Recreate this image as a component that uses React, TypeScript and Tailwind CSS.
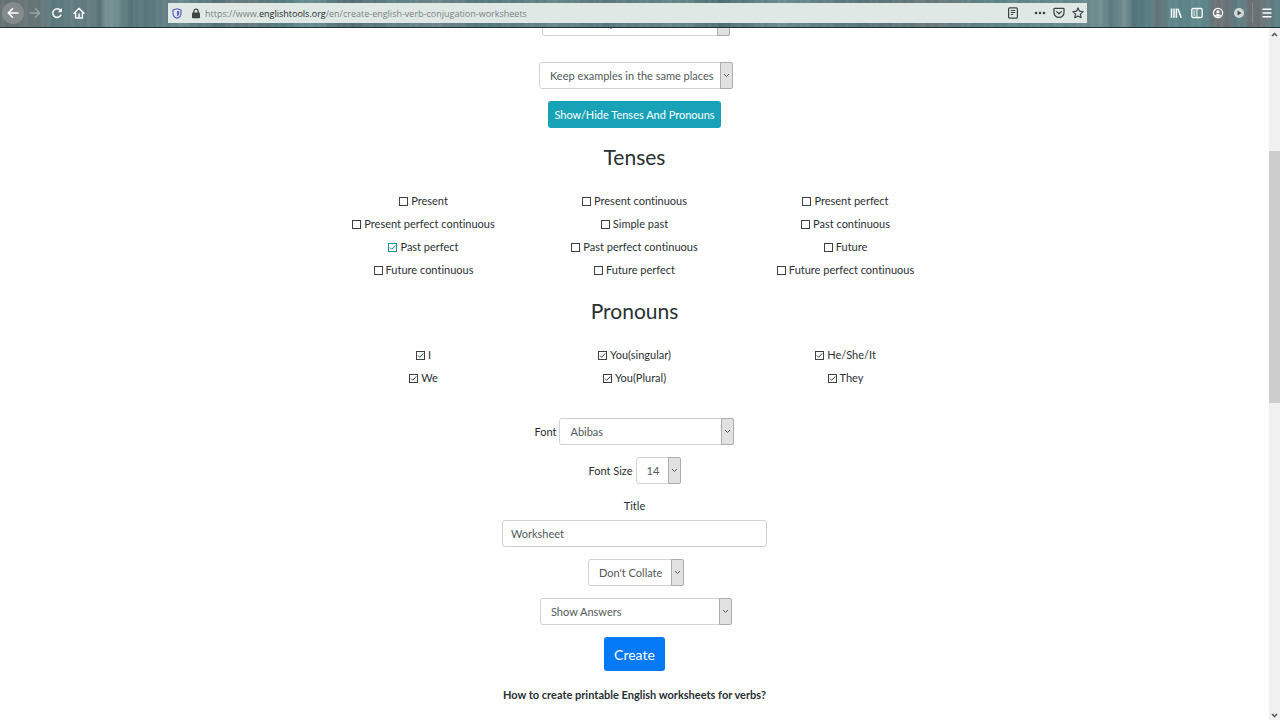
import React from "react";

const tenses = [
  { label: "Present", checked: false },
  { label: "Present continuous", checked: false },
  { label: "Present perfect", checked: false },
  { label: "Present perfect continuous", checked: false },
  { label: "Simple past", checked: false },
  { label: "Past continuous", checked: false },
  { label: "Past perfect", checked: true, active: true },
  { label: "Past perfect continuous", checked: false },
  { label: "Future", checked: false },
  { label: "Future continuous", checked: false },
  { label: "Future perfect", checked: false },
  { label: "Future perfect continuous", checked: false },
];

const pronouns = [
  { label: "I", checked: true },
  { label: "You(singular)", checked: true },
  { label: "He/She/It", checked: true },
  { label: "We", checked: true },
  { label: "You(Plural)", checked: true },
  { label: "They", checked: true },
];

function Tick({ label, checked, active }: { label: string; checked: boolean; active?: boolean }) {
  return (
    <label className="flex h-[23px] items-center justify-center gap-[3px] whitespace-nowrap">
      <span className={active ? "relative flex text-[#1787a8]" : "relative flex text-[#3c4143]"}>
        <input
          type="checkbox"
          defaultChecked={checked}
          className="peer size-[9px] appearance-none border border-current bg-white"
        />
        <svg
          viewBox="0 0 9 9"
          className="pointer-events-none absolute inset-0 hidden size-[9px] peer-checked:block"
          fill="none"
          stroke="currentColor"
          strokeWidth="1"
        >
          <path d="M2 4.6 3.7 6.3 7.3 2.4" />
        </svg>
      </span>
      {label}
    </label>
  );
}

function Select({ id, name, value, width }: { id?: string; name?: string; value: string; width: string }) {
  return (
    <span className={"relative flex h-[27px] " + width}>
      <select
        id={id}
        aria-label={name}
        className="w-full appearance-none rounded-[3px] border border-[#ced4d6] bg-white pt-[2px] pr-3 pl-[10px] text-[#4f5a5a]"
      >
        <option>{value}</option>
      </select>
      <span className="pointer-events-none absolute inset-y-0 right-0 flex w-[13px] items-center justify-center rounded-r-[2px] border border-[#adadad] bg-[#e1e1e1]">
        <svg viewBox="0 0 7 5" className="h-[5px] w-[7px]" fill="none" stroke="#5a5a5a" strokeWidth="1">
          <path d="M1 1 3.5 3.5 6 1" />
        </svg>
      </span>
    </span>
  );
}

function Toolbar() {
  return (
    <header className="flex h-7 shrink-0 items-center border-b border-[#1f3238] bg-[repeating-linear-gradient(90deg,#ffffff00_0px,#ffffff0c_3px,#0000000a_7px,#ffffff00_11px,#00000008_17px,#ffffff0a_19px,#ffffff00_23px),linear-gradient(90deg,#667173_0px,#69777a_40px,#5d7b80_52px,#657d82_90px,#5a7578_100px,#7c9697_106px,#6b8b8c_118px,#56767b_132px,#617d83_160px,#6a8b8e_180px,#54757a_215px,#6c7b80_240px,#557b7f_280px,#6a9296_310px,#566f75_345px,#628488_400px,#70858a_440px,#56797d_480px,#68898a_560px,#5b7980_600px,#66898a_680px,#4f7073_720px,#6d8e91_780px,#58777a_860px,#6c7a7d_930px,#5e8587_990px,#698b8f_1080px,#71908f_1100px,#5c7c80_1110px,#759092_1125px,#56767d_1132px,#597e85_1150px,#67777b_1158px,#5d858a_1170px,#5e888c_1205px,#6c7376_1215px,#6b7376_1228px,#5b8187_1238px,#6d7376_1250px,#687478_1262px,#5d858b_1280px)] pr-[7px] pb-px pl-[2px] text-white">
      <nav className="flex items-center gap-[10px]" aria-label="Navigation">
        <div className="flex items-center gap-[5px]">
          <button aria-label="Back" className="flex size-[22px] items-center justify-center rounded-full bg-[#858b8b]">
            <svg viewBox="0 0 12 12" className="size-3" fill="none" stroke="currentColor" strokeWidth="1.6" strokeLinecap="round" strokeLinejoin="round">
              <path d="M11 6H1.5M5.5 1.8 1.3 6l4.2 4.2" />
            </svg>
          </button>
          <button aria-label="Forward" className="flex w-3 text-[#9aa8aa]">
            <svg viewBox="0 0 12 12" className="size-3" fill="none" stroke="currentColor" strokeWidth="1.3" strokeLinecap="round" strokeLinejoin="round">
              <path d="M1 6h9.5M6.5 1.8 10.7 6 6.5 10.2" />
            </svg>
          </button>
        </div>
        <button aria-label="Reload" className="flex w-3">
          <svg viewBox="0 0 12 12" className="size-3" fill="none" stroke="currentColor" strokeWidth="1.6" strokeLinecap="round">
            <path d="M9.9 8.2A4.3 4.3 0 1 1 9.3 3.1" />
            <path d="M11 1v4.200H6.800z" fill="currentColor" stroke="none" />
          </svg>
        </button>
        <button aria-label="Home" className="flex w-3">
          <svg viewBox="0 0 12 12" className="size-3" fill="none" stroke="currentColor" strokeWidth="1.5" strokeLinecap="round" strokeLinejoin="round">
            <path d="M1 6.300 6 1.300l5 5M2.600 6v4.900h6.800V6M6 10.500V7" />
          </svg>
        </button>
      </nav>

      <div className="mr-[83px] ml-[83px] flex h-5 min-w-0 flex-1 items-center bg-[#e0e8e5] pr-[3px] pl-1 text-[#3b4446]">
        <svg viewBox="0 0 10 11" className="h-[11px] w-[10px] shrink-0" fill="none" stroke="#5b5fc0" strokeWidth="1.2">
          <path d="M5 .8 9 2v3.200C9 7.700 7.300 9.400 5 10.300 2.700 9.400 1 7.700 1 5.200V2z" />
          <path d="M5 2.700v5.700c1.500-.8 2.300-1.900 2.300-3.500V3.400z" fill="#5b5fc0" stroke="none" />
        </svg>
        <svg viewBox="0 0 10 11" className="ml-[9px] h-[11px] w-[10px] shrink-0" fill="#3d4547">
          <rect x="1" y="4.600" width="8" height="5.600" rx=".8" />
          <path d="M2.900 5V3.300a2.100 2.100 0 0 1 4.200 0V5" fill="none" stroke="#3d4547" strokeWidth="1.3" />
        </svg>
        <div
          role="textbox"
          aria-label="Address"
          tabIndex={0}
          className="ml-1 min-w-0 flex-1 truncate pt-px font-['Open_Sans',sans-serif] text-[9px] leading-5 text-[#7a8383]"
        >
          https://www.<span className="text-[#20282a]">englishtools.org</span>
          /en/create-english-verb-conjugation-worksheets
        </div>
        <button aria-label="Reader view" className="flex">
          <svg viewBox="0 0 10 12" className="h-3 w-[10px]" fill="none" stroke="currentColor" strokeWidth="1.2">
            <rect x=".6" y=".8" width="8.800" height="10.400" rx="1" />
            <path d="M2.800 3.500h4.400M2.800 5.500h4.400M2.800 7.500h2.400" strokeWidth="1" />
          </svg>
        </button>
        <button aria-label="Page actions" className="ml-[16px] flex">
          <svg viewBox="0 0 12 12" className="size-3" fill="currentColor">
            <circle cx="2" cy="6" r="1.300" />
            <circle cx="6" cy="6" r="1.300" />
            <circle cx="10" cy="6" r="1.300" />
          </svg>
        </button>
        <button aria-label="Save to Pocket" className="ml-[7px] flex">
          <svg viewBox="0 0 12 12" className="size-3" fill="none" stroke="currentColor" strokeWidth="1.3" strokeLinecap="round" strokeLinejoin="round">
            <path d="M1.700 1.300h8.600c.4 0 .7.300.7.700v3.400a5 5 0 0 1-10 0V2c0-.4.300-.7.700-.7z" />
            <path d="M3.700 4.600 6 6.800l2.300-2.200" />
          </svg>
        </button>
        <button aria-label="Bookmark" className="ml-[7px] flex">
          <svg viewBox="0 0 12 12" className="size-3" fill="none" stroke="currentColor" strokeWidth="1.2" strokeLinejoin="round">
            <path d="M6 .9l1.500 3.300 3.600.4-2.700 2.500.8 3.600L6 8.900l-3.200 1.800.8-3.600L.9 4.600l3.600-.4z" />
          </svg>
        </button>
      </div>

      <div className="flex items-center">
        <button aria-label="Library" className="flex">
          <svg viewBox="0 0 12 12" className="size-3" fill="none" stroke="currentColor" strokeWidth="1.5">
            <path d="M1.500 1.500v9.300M4 1.500v9.300M6.400 1.500v9.300M8 1.800l3.200 8.900" />
          </svg>
        </button>
        <button aria-label="Sidebars" className="ml-[9px] flex">
          <svg viewBox="0 0 12 12" className="size-3" fill="none" stroke="currentColor" strokeWidth="1.3">
            <rect x=".8" y="1.500" width="10.400" height="9" rx="1.200" />
            <path d="M5.900 1.500v9M2.300 4h2M2.300 6h2M2.300 8h2" strokeWidth="1" />
          </svg>
        </button>
        <button aria-label="Account" className="ml-[9px] flex">
          <svg viewBox="0 0 12 12" className="size-3" fill="none" stroke="currentColor" strokeWidth="1.2">
            <circle cx="6" cy="6" r="4.600" />
            <circle cx="6" cy="4.900" r="1.700" fill="currentColor" stroke="none" />
            <path d="M2.900 8.500c1.400-1.700 4.800-1.700 6.200 0-1.400 1.800-4.800 1.800-6.200 0z" fill="currentColor" stroke="none" />
          </svg>
        </button>
        <button aria-label="Media extension" className="ml-[9px] flex">
          <svg viewBox="0 0 12 12" className="size-3">
            <circle cx="6" cy="6" r="5" fill="#d3d9d9" />
            <path d="M4.500 3.500 8.700 6 4.500 8.500z" fill="#465254" />
          </svg>
        </button>
        <span className="ml-[7px] h-5 w-px bg-[#7f898b]" />
        <button aria-label="Menu" className="ml-2 flex">
          <svg viewBox="0 0 12 12" className="size-3" fill="none" stroke="currentColor" strokeWidth="1.4" strokeLinecap="round">
            <path d="M2 2.300h8M2 6h8M2 9.700h8" />
          </svg>
        </button>
      </div>
    </header>
  );
}

export default function App() {
  return (
    <div className="flex h-screen flex-col overflow-hidden bg-white font-[Lato,'Open_Sans',sans-serif] text-[11px] text-[#293033] [font-variant-ligatures:none]">
      <Toolbar />
      <div className="flex min-h-0 flex-1">
        <main className="min-w-0 flex-1 overflow-hidden">
          <form className="-mt-[19px] flex flex-col items-center" onSubmit={(e) => e.preventDefault()}>
            <div className="flex pl-[3px]">
              <Select name="Examples" value="Three examples" width="w-[188px]" />
            </div>
            <div className="mt-[26px] flex pl-[3px]">
              <Select name="Example placement" value="Keep examples in the same places" width="w-[194px]" />
            </div>
            <button type="button" className="mt-3 h-[27px] rounded-[3px] bg-[#17a2b8] px-[6px] pt-px text-white">
              Show/Hide Tenses And Pronouns
            </button>

            <h2 className="mt-[15px] text-[21px] leading-7">Tenses</h2>
            <div className="mt-[19px] grid w-full max-w-[633px] grid-cols-3">
              {tenses.map((t) => (
                <Tick key={t.label} {...t} />
              ))}
            </div>

            <h2 className="mt-[15px] text-[21px] leading-7">Pronouns</h2>
            <div className="mt-[19px] grid w-full max-w-[633px] grid-cols-3">
              {pronouns.map((p) => (
                <Tick key={p.label} {...p} />
              ))}
            </div>

            <div className="mt-7 flex items-center gap-[3px]">
              <label htmlFor="font" className="pt-[2px]">
                Font
              </label>
              <Select id="font" value="Abibas" width="w-[175px]" />
            </div>
            <div className="mt-3 flex items-center gap-[3px]">
              <label htmlFor="size" className="pt-[2px]">
                Font Size
              </label>
              <Select id="size" value="14" width="w-[45px]" />
            </div>
            <label htmlFor="title" className="mt-3 leading-5">
              Title
            </label>
            <input
              id="title"
              type="text"
              defaultValue="Worksheet"
              className="mt-1 h-[27px] w-[265px] rounded-[3px] border border-[#ced4d6] bg-white px-2 text-[#4f5a5a]"
            />
            <div className="mt-3 flex pl-[3px]">
              <Select name="Collate" value="Don't Collate" width="w-[96px]" />
            </div>
            <div className="mt-3 flex pl-[3px]">
              <Select name="Answers" value="Show Answers" width="w-[192px]" />
            </div>
            <button type="submit" className="mt-3 h-[34px] rounded-[3px] bg-[#057af6] px-[10px] text-[14px] text-white">
              Create
            </button>
            <p className="mt-[14px] leading-5 font-bold">How to create printable English worksheets for verbs?</p>
          </form>
        </main>

        <div className="flex w-[11px] shrink-0 flex-col items-center bg-[#f0f0f0]">
          <svg viewBox="0 0 7 5" className="mt-1 h-[5px] w-[7px]" fill="none" stroke="#505050" strokeWidth="1.5">
            <path d="M1 4 3.500 1.500 6 4" />
          </svg>
          <div className="mt-[114px] h-[252px] w-full bg-[#cdcdcd]" />
          <svg viewBox="0 0 7 5" className="mt-auto mb-[2px] h-[5px] w-[7px]" fill="none" stroke="#505050" strokeWidth="1.5">
            <path d="M1 1 3.500 3.500 6 1" />
          </svg>
        </div>
      </div>
    </div>
  );
}
